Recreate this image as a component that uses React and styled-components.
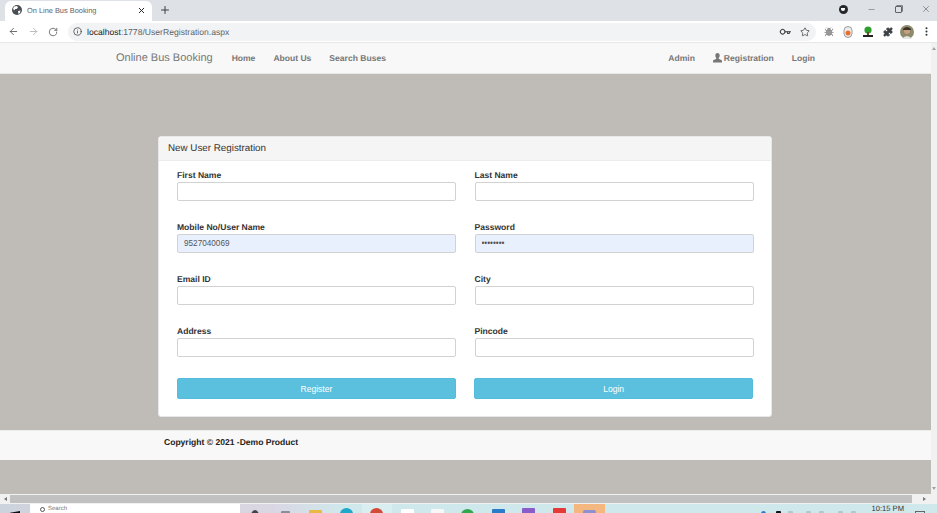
import React from 'react';
import styled, { createGlobalStyle } from 'styled-components';
import { ArrowLeft, ArrowRight, RotateCw, Info, Key, Star, Puzzle, X, Plus, Minus, EllipsisVertical, Bug } from 'lucide-react';

const Global = createGlobalStyle`
  html, body { margin: 0; padding: 0; width: 937px; height: 513px; overflow: hidden; background: #bfbbb7; }
  body { font-family: "Liberation Sans", Arial, sans-serif; text-rendering: geometricPrecision; }
  * { box-sizing: border-box; }
`;

const Screen = styled.div`
  width: 937px; height: 513px; display: flex; flex-direction: column; overflow: hidden;
`;

/* Browser chrome */
const TabStrip = styled.div`
  height: 21px; background: #dee1e6; display: flex; align-items: flex-end; padding-left: 5px; flex: none; overflow: hidden;
`;
const Tab = styled.div`
  width: 147px; height: 20px; background: #fff; border-radius: 6px 6px 0 0; display: flex; align-items: center;
  padding: 0 6px 2px 7px; color: #5f6368; font-size: 7.4px;
`;
const TabTitle = styled.span`
  margin-left: 5px; flex: 1; white-space: nowrap;
`;
const NewTab = styled.div`
  margin-left: 7px; height: 20px; padding-bottom: 2px; display: flex; align-items: center; color: #3c4043;
`;
const WindowControls = styled.div`
  margin-left: auto; margin-right: -3px; height: 21px; padding-bottom: 3px; display: flex; align-items: center; color: #5f6368; flex: none;
`;
const ProfileDot = styled.div`
  width: 9px; height: 9px; border-radius: 50%; background: #26282b; margin-right: 10px; display: flex; align-items: center; justify-content: center;
  &::after { content: ""; width: 4px; height: 3px; background: #fff; border-radius: 0 0 2px 2px; }
`;
const WinButton = styled.div`
  width: 27.5px; display: flex; justify-content: center; align-items: center;
`;
const RestoreIcon = styled.div`
  width: 7px; height: 7px; border: 1px solid #5f6368; border-radius: 1px; box-shadow: 1px -1px 0 -0.2px #5f6368;
`;
const Toolbar = styled.div`
  height: 22px; background: #fff; display: flex; align-items: center; padding-left: 8px; flex: none; border-bottom: 1px solid #e6e7e9;
  color: #5f6368;
`;
const NavIcons = styled.div`
  display: flex; align-items: center; gap: 9px; width: 60px; flex: none;
`;
const Omnibox = styled.div`
  width: 748px; flex: none; height: 18px; background: #f1f3f4; border-radius: 9px; display: flex; align-items: center; padding: 0 6px 0 5px;
`;
const Url = styled.span`
  margin-left: 5px; flex: 1; font-size: 8.6px; color: #5f6368; white-space: nowrap;
  b { font-weight: 400; color: #202124; }
`;
const OmniIcons = styled.div`
  display: flex; align-items: center; gap: 10px; color: #3c4043;
`;
const Extensions = styled.div`
  display: flex; align-items: center; margin-left: 3px; flex: none;
`;
const ExtSlot = styled.div`
  width: 19.6px; display: flex; justify-content: center; align-items: center;
`;

/* Page */
const Viewport = styled.div`
  flex: 1; min-height: 0; display: flex;
`;
const Page = styled.div`
  flex: 1; min-width: 0; background: #bfbbb7; display: flex; flex-direction: column;
`;
const Navbar = styled.nav`
  height: 31px; background: #f8f8f8; border-bottom: 1px solid #e7e7e7; flex: none; display: flex; align-items: center;
  padding: 0 116px;
`;
const Brand = styled.a`
  font-size: 11px; color: #777; margin-right: 19px; white-space: nowrap;
`;
const NavLink = styled.a`
  display: inline-flex; align-items: center; font-size: 8.55px; font-weight: 700; color: #777; white-space: nowrap;
  margin-right: ${p => p.$gap ?? 18}px;
`;
const NavRight = styled.div`
  margin-left: auto; display: flex; align-items: center;
`;
const Card = styled.section`
  width: 614px; height: 281px; margin: 62px 0 0 158px; background: #fff; border-radius: 3px; border: 1px solid #e8e8e8; flex: none;
  display: flex; flex-direction: column;
`;
const CardHeader = styled.h3`
  margin: 0; height: 24px; background: #f5f5f5; border-bottom: 1px solid #ececec; padding: 0 9px 1px; display: flex; align-items: center;
  font-size: 9.8px; font-weight: 400; color: #333; flex: none;
`;
const FormGrid = styled.div`
  display: grid; grid-template-columns: 279px 279px; column-gap: 18.5px; padding: 9px 18px 0; grid-auto-rows: 52px; flex: none;
`;
const Field = styled.div`
  display: flex; flex-direction: column;
`;
const Label = styled.label`
  font-size: 8.55px; font-weight: 700; color: #333; line-height: 11px; margin-bottom: 1px;
`;
const Input = styled.input`
  width: 100%; height: 19px; border: 1px solid #d2d2d2; border-radius: 2px; padding: 0 6px; font: 8.2px "Liberation Sans", Arial, sans-serif; color: #555;
  background: ${p => (p.$filled ? '#e8f0fe' : '#fff')}; outline: none;
`;
const Button = styled.button`
  width: 279px; height: 21px; background: #5bc0de; border: 1px solid #56bcdc; border-radius: 2px; color: #fff;
  font: 8.55px "Liberation Sans", Arial, sans-serif; padding: 0;
`;
const ButtonRow = styled.div`
  display: flex; gap: 18.5px; padding: 0 18px;
`;
const Footer = styled.footer`
  margin-top: 13px; height: 30px; background: #f8f8f8; flex: none; display: flex; align-items: center; padding: 0 0 8px 164px;
  font-size: 8.55px; font-weight: 700; color: #222; border-top: 1px solid #ececec;
`;
const VScroll = styled.div`
  width: 6px; background: #f1f1f1; display: flex; flex-direction: column; align-items: center; justify-content: space-between; padding: 4px 0;
`;
const UpTri = styled.div`
  border-left: 2px solid transparent; border-right: 2px solid transparent; border-bottom: 3px solid #a3a3a3;
`;
const DownTri = styled(UpTri)`
  transform: rotate(180deg);
`;
const HScroll = styled.div`
  height: 10px; flex: none; background: #f1f1f1; display: flex; align-items: center; padding: 1px 0;
`;
const HThumb = styled.div`
  height: 8px; background: #c1c1c1; flex: 1;
`;
const LeftTri = styled.div`
  width: 0; height: 0; border-top: 2px solid transparent; border-bottom: 2px solid transparent; border-right: 3px solid #777;
`;
const RightTri = styled(LeftTri)`
  transform: rotate(180deg);
`;
const ScrollEnd = styled.div`
  width: ${p => p.$w}px; flex: none; display: flex; justify-content: center; align-items: center;
`;

/* Taskbar */
const Taskbar = styled.div`
  height: 9px; flex: none; display: flex; align-items: flex-start; overflow: hidden;
  background: linear-gradient(90deg, #cdd3dc 0, #dad6e2 270px, #cfe8ec 340px, #cfe8ec 100%);
`;
const StartArea = styled.div`
  width: 30px; height: 9px; flex: none; padding: 7px 0 0 10px;
`;
const StartIcon = styled.div`
  width: 10px; height: 6px; background: #111; clip-path: polygon(0 30%, 100% 0, 100% 100%, 0 100%);
`;
const SearchBox = styled.div`
  width: 210px; height: 9px; background: #fff; flex: none; display: flex; align-items: flex-start; padding: 2px 0 0 10px; font-size: 6px; color: #777;
  line-height: 7px; gap: 3px;
`;
const SearchRing = styled.div`
  width: 5px; height: 5px; border: 1px solid #555; border-radius: 50%; margin-top: 1px;
`;
const TaskIcons = styled.div`
  display: flex; align-items: flex-start; flex: none;
`;
const TaskSlot = styled.div`
  width: 30.4px; height: 9px; display: flex; justify-content: center; padding-top: ${p => p.$top ?? 5}px;
  background: ${p => p.$bg || 'transparent'};
`;
const TaskGlyph = styled.div`
  width: ${p => p.$w || 13}px; height: 12px; flex: none; background: ${p => p.$c}; border-radius: ${p => p.$r || '1px'};
`;
const Tray = styled.div`
  margin-left: auto; display: flex; align-items: flex-start; padding-right: 12px;
`;
const Clock = styled.span`
  font-size: 7.6px; color: #333; margin-right: 11px; line-height: 9px; white-space: nowrap;
`;
const TrayDot = styled.div`
  width: 5px; height: 6px; margin: 7px ${p => p.$gap}px 0 0; background: ${p => p.$c}; border-radius: ${p => p.$r || '1px'};
`;
const NotifIcon = styled.div`
  width: 10px; height: 8px; margin-top: 7px; border: 1px solid #666;
`;

const fields = [
  ['First Name', ''], ['Last Name', ''],
  ['Mobile No/User Name', '9527040069', 'text'], ['Password', '12345678', 'password'],
  ['Email ID', ''], ['City', ''],
  ['Address', ''], ['Pincode', ''],
];

const taskIcons = [
  { c: '#e9ba43', top: 6 },
  { c: '#1fa8c9', r: '50%', top: 4 },
  { c: '#d24a38', r: '50%', bg: '#d9eef0', top: 4 },
  { c: '#fff', top: 5 },
  { c: '#f7f7f7', top: 5 },
  { c: '#2fa84f', r: '50%', top: 5 },
  { c: '#2a7bc8', top: 5 },
  { c: '#8a5cc9', top: 4 },
  { c: '#e53935', top: 4 },
  { c: '#8c8fd0', r: '2px', bg: '#f4b77f', top: 6 },
];

const trayDots = [
  { c: '#2a7bc8', r: '50%', gap: 10 },
  { c: '#111', gap: 7 },
  { c: '#b3c6c9', gap: 13 },
  { c: '#b3c6c9', gap: 8 },
  { c: '#b3c6c9', gap: 14 },
  { c: '#b3c6c9', gap: 8 },
  { c: '#b3c6c9', gap: 15 },
];

export default function App() {
  return (
    <Screen>
      <Global />
      <TabStrip>
        <Tab>
          <svg width="10" height="10" viewBox="0 0 10 10">
            <circle cx="5" cy="5" r="5" fill="#4a4e53" />
            <path d="M2 1.500 L5 1 L6 2.500 L4.500 4 L3 4 L2.500 5.500 L1 4Z M6 6 L8.500 5.500 L8 8 L6.500 9Z" fill="#fff" />
          </svg>
          <TabTitle>On Line Bus Booking</TabTitle>
          <X size={9} color="#202124" strokeWidth={2.6} />
        </Tab>
        <NewTab><Plus size={12} strokeWidth={2} /></NewTab>
        <WindowControls>
          <ProfileDot />
          <WinButton><Minus size={9} strokeWidth={1.5} /></WinButton>
          <WinButton><RestoreIcon /></WinButton>
          <WinButton><X size={10} strokeWidth={1.5} /></WinButton>
        </WindowControls>
      </TabStrip>
      <Toolbar>
        <NavIcons>
          <ArrowLeft size={11} strokeWidth={2} />
          <ArrowRight size={11} strokeWidth={2} color="#b5b8bc" />
          <RotateCw size={10} strokeWidth={2} />
        </NavIcons>
        <Omnibox>
          <Info size={9} strokeWidth={2} color="#3c4043" />
          <Url><b>localhost</b>:1778/UserRegistration.aspx</Url>
          <OmniIcons>
            <Key size={10} strokeWidth={2.4} style={{ transform: 'rotate(45deg)' }} />
            <Star size={10} strokeWidth={1.8} />
          </OmniIcons>
        </Omnibox>
        <Extensions>
          <ExtSlot><Bug size={10} color="#888" fill="#999" /></ExtSlot>
          <ExtSlot>
            <svg width="10" height="12" viewBox="0 0 10 12"><rect x="1" y="0.5" width="8" height="11" rx="4" fill="#eee" stroke="#999" /><circle cx="5" cy="7" r="2.5" fill="#e8702a" /></svg>
          </ExtSlot>
          <ExtSlot>
            <svg width="12" height="12" viewBox="0 0 12 12"><circle cx="6" cy="4" r="3.6" fill="#2f9e2f" /><rect x="5" y="6" width="2" height="3" fill="#6b4a1e" /><rect x="1" y="9" width="10" height="2" fill="#222" /></svg>
          </ExtSlot>
          <ExtSlot><Puzzle size={10} fill="#3c4043" color="#3c4043" /></ExtSlot>
          <ExtSlot>
            <svg width="14" height="14" viewBox="0 0 14 14"><circle cx="7" cy="7" r="7" fill="#8e8a6b" /><circle cx="7" cy="6" r="3" fill="#c79f7f" /><path d="M3 4 Q7 0 11 4 L11 5 L3 5Z" fill="#3a332a" /><path d="M2 14 Q7 8 12 14Z" fill="#e6e6e6" /></svg>
          </ExtSlot>
          <ExtSlot><EllipsisVertical size={11} strokeWidth={2.4} color="#333" /></ExtSlot>
        </Extensions>
      </Toolbar>
      <Viewport>
        <Page>
          <Navbar>
            <Brand>Online Bus Booking</Brand>
            <NavLink>Home</NavLink>
            <NavLink>About Us</NavLink>
            <NavLink>Search Buses</NavLink>
            <NavRight>
              <NavLink>Admin</NavLink>
              <NavLink>
                <svg width="9" height="10" viewBox="0 0 9 10" style={{ marginRight: 2 }}>
                  <path d="M4.500 0C3 0 2.300 1.100 2.300 2.600c0 1 .5 1.900 1 2.400v.8L.3 7.300C0 7.500 0 8 0 9.500h9c0-1.500 0-2-.3-2.200L5.700 5.800V5c.5-.5 1-1.400 1-2.400C6.700 1.100 6 0 4.500 0z" fill="#777" />
                </svg>
                Registration
              </NavLink>
              <NavLink $gap={0}>Login</NavLink>
            </NavRight>
          </Navbar>
          <Card>
            <CardHeader>New User Registration</CardHeader>
            <FormGrid>
              {fields.map(([label, value, type]) => (
                <Field key={label}>
                  <Label>{label}</Label>
                  <Input type={type || 'text'} defaultValue={value} $filled={!!value} />
                </Field>
              ))}
            </FormGrid>
            <ButtonRow>
              <Button>Register</Button>
              <Button>Login</Button>
            </ButtonRow>
          </Card>
          <Footer>Copyright © 2021 -Demo Product</Footer>
        </Page>
        <VScroll><UpTri /><DownTri /></VScroll>
      </Viewport>
      <HScroll>
        <ScrollEnd $w={10}><LeftTri /></ScrollEnd>
        <HThumb />
        <ScrollEnd $w={25}><RightTri /></ScrollEnd>
      </HScroll>
      <Taskbar>
        <StartArea><StartIcon /></StartArea>
        <SearchBox><SearchRing />Search</SearchBox>
        <TaskIcons>
          <TaskSlot $top={6}><TaskGlyph $c="#444" $r="50%" $w={8} /></TaskSlot>
          <TaskSlot $top={7}><TaskGlyph $c="#8b8f98" $w={9} /></TaskSlot>
          {taskIcons.map((t, i) => (
            <TaskSlot key={i} $bg={t.bg} $top={t.top}><TaskGlyph $c={t.c} $r={t.r} /></TaskSlot>
          ))}
        </TaskIcons>
        <Tray>
          {trayDots.map((d, i) => (
            <TrayDot key={i} $c={d.c} $r={d.r} $gap={d.gap} />
          ))}
          <Clock>10:15 PM</Clock>
          <NotifIcon />
        </Tray>
      </Taskbar>
    </Screen>
  );
}
